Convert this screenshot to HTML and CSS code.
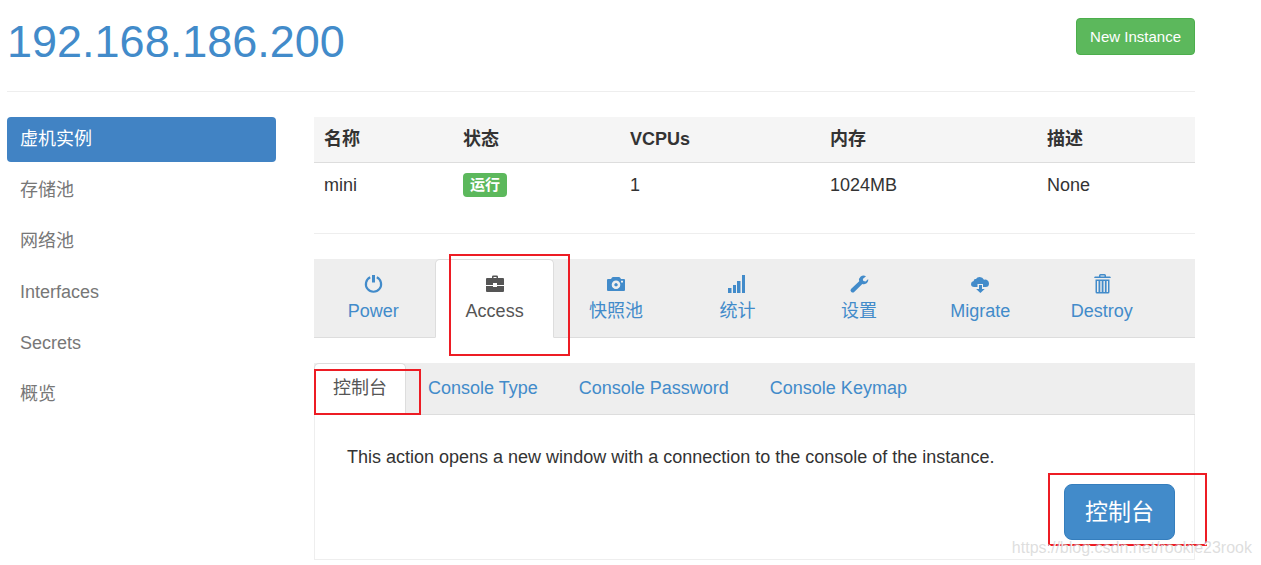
FILE: index.html
```html
<!DOCTYPE html>
<html lang="zh-CN">
	<head>
		<meta charset="utf-8">
		<title>192.168.186.200</title>
		<link rel="stylesheet" href="styles.css">
	</head>
	<body>
		<header class="page-header">
			<h1><a href="#">192.168.186.200</a></h1>
			<button type="button" class="btn btn-success">New Instance</button>
		</header>
		<div class="row">
			<nav class="sidebar">
				<a class="active" href="#">虚机实例</a>
				<a href="#">存储池</a>
				<a href="#">网络池</a>
				<a href="#">Interfaces</a>
				<a href="#">Secrets</a>
				<a href="#">概览</a>
			</nav>
			<main>
				<table class="instances">
					<thead>
						<tr>
							<th class="col-name">名称</th>
							<th class="col-status">状态</th>
							<th class="col-cpu">VCPUs</th>
							<th class="col-mem">内存</th>
							<th>描述</th>
						</tr>
					</thead>
					<tbody>
						<tr>
							<td>mini</td>
							<td><span class="label">运行</span></td>
							<td>1</td>
							<td>1024MB</td>
							<td>None</td>
						</tr>
					</tbody>
				</table>
				<hr>
				<nav class="tabs actions">
					<a href="#">
						<svg class="icon" viewBox="0 0 20 20"><path d="M7.2 3.3A7.6 7.6 0 1 0 13.800 3.300" fill="none" stroke="currentColor" stroke-width="2.2"/><path d="M9 1h3v7.500H9z"/></svg>
						Power
					</a>
					<a class="active" href="#">
						<svg class="icon" viewBox="0 0 20 20"><path d="M7 4V2.800Q7 1.500 8.300 1.500h3.400Q13 1.500 13 2.800V4h5q1 0 1 1v6h-7V9H8v2H1V5q0-1 1-1zM8.500 4h3V3h-3z" fill-rule="evenodd"/><path d="M1 12h7v1h4v-1h7v5q0 1-1 1H2q-1 0-1-1z"/></svg>
						Access
						<span class="mark mark-access"></span>
					</a>
					<a href="#">
						<svg class="icon" viewBox="0 0 20 20"><path fill-rule="evenodd" d="M1 6q0-1 1-1h3l1-1.500Q6.300 3 7 3h6q.7 0 1 .5L15 5h3q1 0 1 1v10q0 1-1 1H2q-1 0-1-1zM10 6.500a4.300 4.300 0 1 0 0 8.600 4.300 4.300 0 0 0 0-8.600zm0 2a2.300 2.300 0 1 1 0 4.600 2.300 2.300 0 0 1 0-4.600zM15 6.700v1.800h2V6.700z"/><path fill="#eee" fill-rule="evenodd" d="M10 7a3.800 3.800 0 1 0 0 7.600A3.800 3.800 0 0 0 10 7zm0 2.300a1.500 1.500 0 1 1 0 3 1.500 1.500 0 0 1 0-3z"/><circle cx="10" cy="10.800" r="1.500"/></svg>
						快照池
					</a>
					<a href="#">
						<svg class="icon" viewBox="0 0 20 20"><path d="M1 14h3.500v5H1zM6 11h3v8H6zM10 7h3.500v12H10zM15 1h3v18h-3z"/></svg>
						统计
					</a>
					<a href="#">
						<svg class="icon" viewBox="0 0 20 20"><path d="M17 2.200 13.800 5l.5 2.100 2.300.5L19.200 5q.5 2.300-1.200 4-1.800 1.700-4.700.9L5.200 18Q4 19.200 2.300 18q-1.600-1.500-.3-3l8.200-7.800Q9.600 4.300 11.700 2.600 14 .8 17 2.200z"/></svg>
						设置
					</a>
					<a href="#">
						<svg class="icon" viewBox="0 0 20 20"><path d="M4.200 13Q1 13 1 10.100q0-2.500 2.700-3Q3.500 4.700 6 5 7 3 9.700 3q3 0 4.300 2.700 2-.8 3.600.7Q19 7.500 19 9.500q0 3.500-3.400 3.500H13v-3H7.500v3z"/><path d="M9 11h3v4h2.700l-4.300 4-4.300-4H9z"/></svg>
						Migrate
					</a>
					<a href="#">
						<svg class="icon" viewBox="0 0 20 20"><path d="M7 1.500Q7 0 8.500 0h4Q14 0 14 1.500v1h4q.8 0 .8 1.500H2.200q0-1.500.8-1.500h4zM8.500 2.500h4v-1h-4z" fill-rule="evenodd"/><path fill-rule="evenodd" d="M3.500 5.500h14V18q0 1.500-1.500 1.500H5q-1.500 0-1.500-1.500zM5 7v11h1.500V7zm3.300 0v11h1.400V7zm3.200 0v11h1.400V7zm3.100 0v11H16V7z"/></svg>
						Destroy
					</a>
				</nav>
				<nav class="tabs console-tabs">
					<a class="active" href="#">控制台<span class="mark mark-tab"></span></a>
					<a href="#">Console Type</a>
					<a href="#">Console Password</a>
					<a href="#">Console Keymap</a>
				</nav>
				<section class="panel">
					<p>This action opens a new window with a connection to the console of the instance.</p>
					<div class="panel-action">
						<button type="button" class="btn btn-primary">控制台</button>
						<span class="mark mark-button"></span>
					</div>
				</section>
			</main>
		</div>
		<div class="watermark">https://blog.csdn.net/rookie23rook</div>
	</body>
</html>
```
FILE: styles.css
```css
* {
	box-sizing: border-box;
}
body {
	margin: 0;
	padding: 0 66px 0 7px;
	position: relative;
	background: #fff;
	color: #333;
	font-family: "Liberation Sans", "Noto Sans CJK SC", sans-serif;
	font-size: 18px;
	line-height: 25px;
}
a {
	color: #428bca;
	text-decoration: none;
}
.page-header {
	display: flex;
	justify-content: space-between;
	align-items: flex-start;
	padding: 17px 0 24px;
	margin-bottom: 25px;
	border-bottom: 1px solid #eee;
}
.page-header h1 {
	margin: 0;
	font-size: 45px;
	font-weight: normal;
	line-height: 50px;
}
.btn {
	font-family: inherit;
	color: #fff;
	cursor: pointer;
}
.btn-success {
	margin-top: 1px;
	padding: 5px 13px;
	background: #5cb85c;
	border: 1px solid #4cae4c;
	border-radius: 4px;
	font-size: 15px;
	line-height: 25px;
}
.btn-primary {
	padding: 10px 20px;
	background: #428bca;
	border: 1px solid #357ebd;
	border-radius: 8px;
	font-size: 23px;
	line-height: 34px;
}
.row {
	display: grid;
	grid-template-columns: 269fr 881fr;
	gap: 38px;
}
.sidebar {
	display: flex;
	flex-direction: column;
	gap: 6px;
}
.sidebar a {
	padding: 10px 13px;
	border-radius: 4px;
	color: #777;
}
.sidebar .active {
	background: #4183c4;
	color: #fff;
}
main {
	min-width: 0;
}
.instances {
	width: 100%;
	table-layout: fixed;
	border-collapse: separate;
	border-spacing: 0;
}
.instances th,
.instances td {
	padding: 10px;
	text-align: left;
	line-height: 25px;
}
.instances th {
	background: #f5f5f5;
	border-bottom: 1px solid #ddd;
}
.col-name {
	width: 139px;
}
.col-status {
	width: 167px;
}
.col-cpu {
	width: 200px;
}
.col-mem {
	width: 217px;
}
.label {
	display: inline-block;
	padding: 0 7px;
	background: #5cb85c;
	border-radius: 4px;
	color: #fff;
	font-size: 15px;
	font-weight: bold;
	line-height: 24px;
	vertical-align: top;
}
hr {
	margin: 15px 0 25px;
	border: 0;
	border-top: 1px solid #eee;
}
.instances + hr {
	margin-top: 25px;
}
.tabs {
	display: flex;
	gap: 3px;
	background: #eee;
	border-bottom: 1px solid #ddd;
}
.tabs a {
	position: relative;
	margin-bottom: -1px;
	border: 1px solid transparent;
	border-radius: 5px 5px 0 0;
}
.tabs .active {
	background: #fff;
	border-color: #ddd;
	border-bottom-color: #fff;
	color: #555;
}
.actions {
	padding-right: 34px;
	margin-bottom: 25px;
}
.actions a {
	flex: 1;
	display: flex;
	flex-direction: column;
	align-items: center;
	gap: 5px;
	padding: 14px 0 13px;
}
.icon {
	width: 20px;
	height: 20px;
	fill: currentColor;
}
.console-tabs a {
	padding: 12px 18px 13px;
}
.panel {
	padding: 30px 19px 19px;
	border: 1px solid #eee;
	border-top: 0;
}
.panel p {
	margin: 0 13px 14px;
}
.panel-action {
	position: relative;
	display: flex;
	width: fit-content;
	margin-left: auto;
}
/* red frames round the tabs and the button to click */
.mark {
	position: absolute;
	z-index: 1;
	border: 2px solid #ed1c24;
	pointer-events: none;
}
.mark-access {
	top: -6px;
	left: 13px;
	width: 121px;
	height: 102px;
}
.mark-tab {
	top: 5px;
	left: -1px;
	width: 107px;
	height: 46px;
}
.mark-button {
	top: -11px;
	left: -16px;
	right: -32px;
	bottom: -6px;
}
.watermark {
	position: absolute;
	right: 9px;
	bottom: 0;
	z-index: 2;
	color: rgba(200, 200, 200, 0.6);
	font-size: 16px;
	text-shadow: 1px 1px 0 #fff;
}
```
